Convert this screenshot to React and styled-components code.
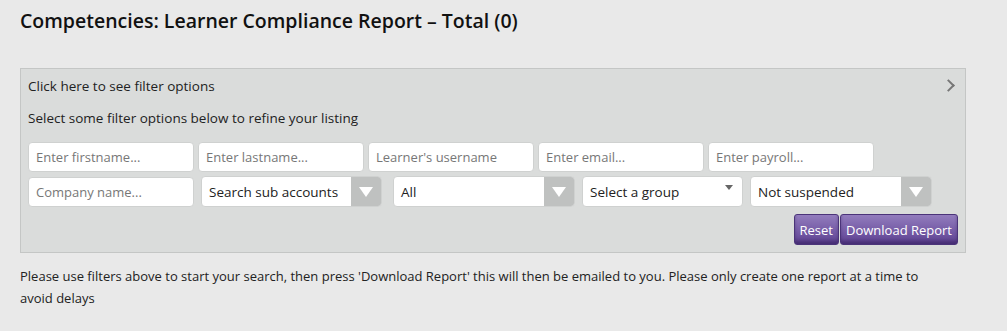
import styled, { createGlobalStyle } from "styled-components";

const Global = createGlobalStyle`
  body {
    margin: 0;
    background: #e9e9e9;
    font-family: "Open Sans", "Liberation Sans", sans-serif;
    color: #222;
  }
`;

const Page = styled.div`
  padding: 0 20px;
  width: 946px;
`;

const Title = styled.h1`
  margin: 0;
  padding-top: 9px;
  height: 68px;
  box-sizing: border-box;
  font-size: 19.5px;
  font-weight: 600;
  line-height: 24px;
  color: #111;
`;

const Panel = styled.div`
  background: #dadcdb;
  border: 1px solid #c4c6c5;
  padding: 0 7px 7px;
  box-sizing: border-box;
  width: 946px;
`;

const Toggle = styled.div`
  display: flex;
  justify-content: space-between;
  align-items: center;
  height: 33px;
  font-size: 13.5px;
  cursor: pointer;
`;

const Chevron = styled.span`
  width: 7px;
  height: 7px;
  border-right: 2px solid #777;
  border-top: 2px solid #777;
  transform: rotate(45deg);
  margin-right: 5px;
`;

const Hint = styled.p`
  margin: 0;
  font-size: 13.5px;
  line-height: 32px;
  height: 40px;
`;

const Row = styled.div`
  display: flex;
  align-items: center;
  gap: ${(p) => p.$gap || 4}px;
  margin-bottom: ${(p) => p.$mb ?? 4}px;
`;

const Input = styled.input`
  box-sizing: border-box;
  width: ${(p) => p.$w || 166}px;
  height: 30px;
  border: 1px solid #cfd1d0;
  border-radius: 4px;
  background: #fff;
  padding: 0 7px;
  font-family: inherit;
  font-size: 13px;
  color: #222;
  outline: none;
  &::placeholder {
    color: #777;
  }
`;

const Select = styled.div`
  box-sizing: border-box;
  width: ${(p) => p.$w}px;
  margin-left: ${(p) => p.$ml || 0}px;
  height: 31px;
  display: flex;
  align-items: stretch;
  border: 1px solid #cfd1d0;
  border-radius: 4px;
  background: #fff;
  overflow: hidden;
  font-size: 13.5px;
`;

const SelectText = styled.span`
  flex: 1;
  display: flex;
  align-items: center;
  padding-left: 7px;
`;

const ArrowBox = styled.span`
  width: 30px;
  background: #bfc1c0;
  display: flex;
  align-items: center;
  justify-content: center;
  &::after {
    content: "";
    border-left: 7px solid transparent;
    border-right: 7px solid transparent;
    border-top: 10px solid #fff;
  }
`;

const SmallArrow = styled.span`
  width: 26px;
  display: flex;
  justify-content: center;
  padding-top: 8px;
  &::after {
    content: "";
    border-left: 4px solid transparent;
    border-right: 4px solid transparent;
    border-top: 5px solid #666;
  }
`;

const Actions = styled.div`
  display: flex;
  justify-content: flex-end;
  gap: 1px;
  margin-top: 7px;
`;

const Button = styled.button`
  height: 31px;
  padding: 0 5px;
  border: 1px solid #4b3479;
  border-radius: 3px;
  background: linear-gradient(#927cbd, #6e53a0 70%, #563b87);
  box-shadow: inset 0 -3px 3px rgba(40, 20, 80, 0.35);
  color: #fff;
  font-family: inherit;
  font-size: 13px;
  cursor: pointer;
`;

const Note = styled.p`
  margin: 12px 0 0;
  font-size: 13px;
  line-height: 22px;
  width: 920px;
`;

export default function App() {
  return (
    <Page>
      <Global />
      <Title>Competencies: Learner Compliance Report – Total (0)</Title>
      <Panel>
        <Toggle>
          <span>Click here to see filter options</span>
          <Chevron />
        </Toggle>
        <Hint>Select some filter options below to refine your listing</Hint>
        <Row>
          <Input placeholder="Enter firstname..." />
          <Input placeholder="Enter lastname..." />
          <Input placeholder="Learner's username" />
          <Input placeholder="Enter email..." />
          <Input placeholder="Enter payroll..." />
        </Row>
        <Row $gap={7} $mb={0}>
          <Input placeholder="Company name..." />
          <Select $w={181}>
            <SelectText>Search sub accounts</SelectText>
            <ArrowBox />
          </Select>
          <Select $w={182} $ml={4}>
            <SelectText>All</SelectText>
            <ArrowBox />
          </Select>
          <Select $w={161}>
            <SelectText>Select a group</SelectText>
            <SmallArrow />
          </Select>
          <Select $w={182}>
            <SelectText>Not suspended</SelectText>
            <ArrowBox />
          </Select>
        </Row>
        <Actions>
          <Button>Reset</Button>
          <Button>Download Report</Button>
        </Actions>
      </Panel>
      <Note>
        Please use filters above to start your search, then press 'Download Report' this will then be emailed to you. Please only create one report at a time to avoid delays
      </Note>
    </Page>
  );
}
